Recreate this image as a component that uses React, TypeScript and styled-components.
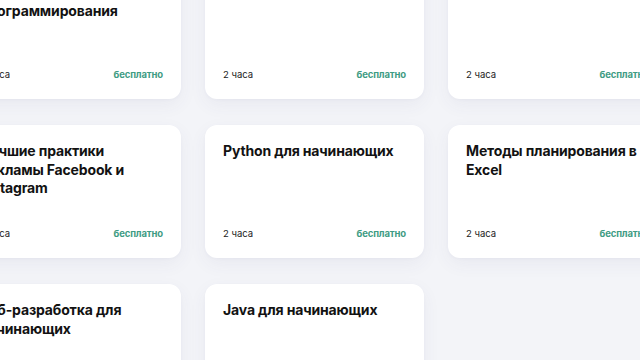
import React from "react";
import styled, { createGlobalStyle } from "styled-components";

const Global = createGlobalStyle`
  html, body { margin: 0; padding: 0; background: #f3f4f8; overflow: hidden; }
  body { font-family: Inter, "Noto Sans", sans-serif; }
`;

const Page = styled.div`
  width: 640px;
  height: 360px;
  overflow: hidden;
  background: #f3f4f8;
`;

const Grid = styled.div`
  display: grid;
  grid-template-columns: repeat(3, 219px);
  grid-auto-rows: 133px;
  column-gap: 24px;
  row-gap: 26px;
  margin: -34px 0 0 -38px;
`;

const Card = styled.div`
  background: #ffffff;
  border-radius: 12px;
  box-shadow: 0 6px 18px rgba(60, 70, 120, 0.06), 0 1px 3px rgba(60, 70, 120, 0.03);
  padding: 17px 18px 18px;
  box-sizing: border-box;
  display: flex;
  flex-direction: column;
  justify-content: space-between;
`;

const Title = styled.div`
  font-size: 14px;
  line-height: 18.7px;
  font-weight: 700;
  color: #121212;
  letter-spacing: -0.15px;
`;

const Footer = styled.div`
  display: flex;
  justify-content: space-between;
  align-items: center;
  font-size: 9.5px;
  line-height: 12px;
`;

const Duration = styled.span`
  color: #222;
  font-weight: 400;
`;

const Price = styled.span`
  color: #3f9c84;
  font-weight: 700;
  letter-spacing: -0.15px;
`;

const courses = [
  "Основы программирования",
  "Основы SQL",
  "Основы Excel",
  "Лучшие практики рекламы Facebook и Instagram",
  "Python для начинающих",
  "Методы планирования в Excel",
  "Веб-разработка для начинающих",
  "Java для начинающих",
];

export default function App() {
  return (
    <Page>
      <Global />
      <Grid>
        {courses.map((t) => (
          <Card key={t}>
            <Title>{t}</Title>
            <Footer>
              <Duration>2 часа</Duration>
              <Price>бесплатно</Price>
            </Footer>
          </Card>
        ))}
      </Grid>
    </Page>
  );
}
